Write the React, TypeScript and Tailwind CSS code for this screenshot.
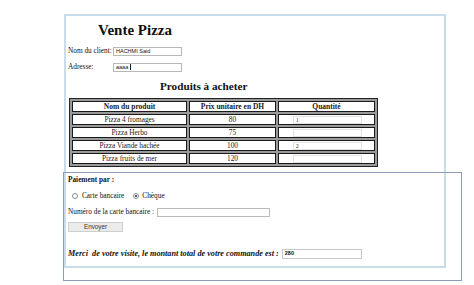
import React from "react";

const rows = [
  { name: "Pizza 4 fromages", price: "80", qty: "1" },
  { name: "Pizza Herbo", price: "75", qty: "" },
  { name: "Pizza Viande hachée", price: "100", qty: "2" },
  { name: "Pizza fruits de mer", price: "120", qty: "" },
];

function Radio({ checked }: { checked?: boolean }) {
  return (
    <span className="w-[6px] h-[6px] rounded-full border border-[#8a8a8a] bg-white flex items-center justify-center">
      {checked && <span className="w-[2px] h-[2px] rounded-full bg-[#222]" />}
    </span>
  );
}

export default function App() {
  const cell = "border-[1.5px] border-[#1a1a1a] h-[11px] p-0 text-center align-middle leading-[9px] bg-white text-[#222]";
  return (
    <div
      className="w-[474px] h-[285px] overflow-hidden bg-white text-[#111] text-[7.3px] pt-[14px]"
      style={{ fontFamily: '"Liberation Serif", "Times New Roman", serif' }}
    >
      <div className="ml-[64px] w-[382px] h-[254px] border-2 border-[#c9dcea] flex flex-col">
        <div className="pl-[32px] mt-[5px] text-[15px] leading-[18px] font-bold">Vente Pizza</div>
        <div className="flex items-center mt-[7px] pl-[2px] h-[10px]">
          <span className="w-[45px] leading-[10px]">Nom du client:</span>
          <div className="w-[69px] h-[9px] border border-[#b8b8b8] flex items-center pl-[2px] text-[5.5px] leading-[7px]" style={{ fontFamily: '"Liberation Sans", Arial, sans-serif' }}>
            HACHMI Said
          </div>
        </div>
        <div className="flex items-center mt-[6px] pl-[2px] h-[10px]">
          <span className="w-[45px] leading-[10px]">Adresse:</span>
          <div className="w-[69px] h-[9px] border border-[#b8b8b8] flex items-center pl-[2px] text-[5.5px] leading-[7px]" style={{ fontFamily: '"Liberation Sans", Arial, sans-serif' }}>
            aaaa <span className="ml-[2px] w-px h-[6px] bg-[#222]" />
          </div>
        </div>
        <div className="pl-[94px] mt-[7px] text-[11.2px] leading-[14px] font-bold">Produits à acheter</div>
        <div className="ml-[3px] mt-[5px]">
          <table className="border-separate border-spacing-[2px] border border-[#222] bg-[#9a9a9a] text-[7.3px]">
            <thead>
              <tr>
                <th className={`${cell} w-[115px] font-bold text-[7.5px]`}>Nom du produit</th>
                <th className={`${cell} w-[87px] font-bold text-[7.5px]`}>Prix unitaire en DH</th>
                <th className={`${cell} w-[97px] font-bold text-[7.5px]`}>Quantité</th>
              </tr>
            </thead>
            <tbody>
              {rows.map((r) => (
                <tr key={r.name}>
                  <td className={cell}>{r.name}</td>
                  <td className={cell}>{r.price}</td>
                  <td className={cell}>
                    <div className="ml-[14px] w-[69px] h-[8px] border border-[#e2e2e2] text-left pl-[2px] text-[5.5px] leading-[6px]">
                      {r.qty}
                    </div>
                  </td>
                </tr>
              ))}
            </tbody>
          </table>
        </div>
      </div>

      <div className="ml-[63px] mt-[-96px] w-[399px] h-[109px] border border-[#8a9db3] flex flex-col pl-[4px]">
        <div className="mt-[2px] font-bold leading-[10px]">Paiement par :</div>
        <div className="mt-[6px] flex items-center h-[10px] leading-[10px]">
          <span className="ml-[4px]"><Radio /></span>
          <span className="ml-[4px]">Carte bancaire</span>
          <span className="ml-[9px]"><Radio checked /></span>
          <span className="ml-[3px]">Chèque</span>
        </div>
        <div className="mt-[6px] flex items-center h-[10px] leading-[10px]">
          <span>Numéro de la carte bancaire :</span>
          <div className="ml-[3px] w-[113px] h-[9px] border border-[#bcbcbc]" />
        </div>
        <div className="mt-[5px] w-[55px] h-[10px] bg-[#ebebeb] border border-[#cfcfcf] flex items-center justify-center text-[6.3px] text-[#333] leading-[8px]" style={{ fontFamily: '"Liberation Sans", Arial, sans-serif' }}>
          Envoyer
        </div>
        <div className="mt-[16px] flex items-center h-[11px]">
          <span className="font-bold italic leading-[10px] text-[8.2px]">Merci&nbsp; de votre visite, le montant total de votre commande est :</span>
          <div className="ml-[3px] w-[80px] h-[10px] border border-[#c8c8c8] flex items-center pl-[2px] text-[5.5px] font-bold leading-[7px]" style={{ fontFamily: '"Liberation Sans", Arial, sans-serif' }}>
            280
          </div>
        </div>
      </div>
    </div>
  );
}
